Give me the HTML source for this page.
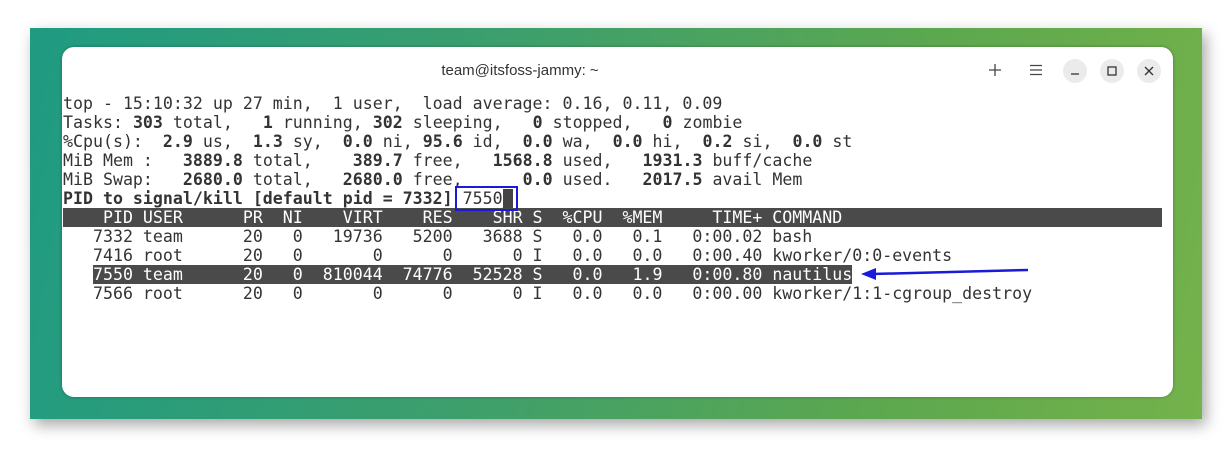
<!DOCTYPE html>
<html><head><style>
body{margin:0;width:1232px;height:451px;background:#fff;position:relative;overflow:hidden;font-family:"DejaVu Sans Mono","Liberation Mono",monospace}
.bg{position:absolute;left:30px;top:28px;width:1172px;height:391px;background:linear-gradient(100deg,#1f9b82 0%,#3d9f6c 40%,#5ea84e 75%,#74b24b 100%);box-shadow:4px 6px 14px rgba(0,0,0,.35)}
.win{position:absolute;left:62px;top:47px;width:1111px;height:350px;background:#fff;border-radius:12px;box-shadow:0 0 3px rgba(0,0,0,.3)}
.title{position:absolute;left:358px;width:200px;top:15px;text-align:center;font:15px "Liberation Sans",sans-serif;color:#333}
.btn{position:absolute;top:12px;width:24px;height:24px;border-radius:50%;background:#ebebeb}
pre{position:absolute;left:63px;top:94px;margin:0;font-size:16.6px;line-height:19px;color:#333}
b{font-weight:bold}
.hd{background:#4a4a4a;color:#fff;display:inline-block;width:1099px}
.sel{background:#4a4a4a;color:#fff}
.box{position:absolute;left:455px;top:186px;width:59px;height:21px;border:2px solid #1a1ad8}
.cur{background:#444;color:#444}
</style></head><body>
<div class="bg"></div>
<div class="win">
<div class="title">team@itsfoss-jammy: ~</div>
<svg style="position:absolute;left:926px;top:16px" width="14" height="14"><path d="M7 1v12M1 7h12" stroke="#444" stroke-width="1.3"/></svg>
<svg style="position:absolute;left:967px;top:17px" width="14" height="12"><path d="M1 1.5h12M1 6h12M1 10.5h12" stroke="#444" stroke-width="1.2"/></svg>
<div class="btn" style="left:1001px"><svg width="24" height="24"><path d="M8 15h8" stroke="#333" stroke-width="1.3"/></svg></div>
<div class="btn" style="left:1038px"><svg width="24" height="24"><rect x="8" y="8" width="8" height="8" fill="none" stroke="#333" stroke-width="1.3"/></svg></div>
<div class="btn" style="left:1075px"><svg width="24" height="24"><path d="M8 8l8 8M16 8l-8 8" stroke="#333" stroke-width="1.3"/></svg></div>
</div>
<pre>top - 15:10:32 up 27 min,  1 user,  load average: 0.16, 0.11, 0.09
Tasks: <b>303</b> total,   <b>1</b> running, <b>302</b> sleeping,   <b>0</b> stopped,   <b>0</b> zombie
%Cpu(s):  <b>2.9</b> us,  <b>1.3</b> sy,  <b>0.0</b> ni, <b>95.6</b> id,  <b>0.0</b> wa,  <b>0.0</b> hi,  <b>0.2</b> si,  <b>0.0</b> st
MiB Mem :   <b>3889.8</b> total,    <b>389.7</b> free,   <b>1568.8</b> used,   <b>1931.3</b> buff/cache
MiB Swap:   <b>2680.0</b> total,   <b>2680.0</b> free,      <b>0.0</b> used.   <b>2017.5</b> avail Mem
<b>PID to signal/kill [default pid = 7332] </b>7550<span class="cur">_</span>
<span class="hd">    PID USER      PR  NI    VIRT    RES    SHR S  %CPU  %MEM     TIME+ COMMAND</span>
   7332 team      20   0   19736   5200   3688 S   0.0   0.1   0:00.02 bash
   7416 root      20   0       0      0      0 I   0.0   0.0   0:00.40 kworker/0:0-events
   <span class="sel">7550 team      20   0  810044  74776  52528 S   0.0   1.9   0:00.80 nautilus</span>
   7566 root      20   0       0      0      0 I   0.0   0.0   0:00.00 kworker/1:1-cgroup_destroy</pre>
<div class="box"></div>
<svg style="position:absolute;left:0;top:0" width="1232" height="451"><path d="M1028 270L872 274" stroke="#1a1ad8" stroke-width="2.5"/><path d="M861 274l15-6v12z" fill="#1a1ad8"/></svg>
</body></html>
